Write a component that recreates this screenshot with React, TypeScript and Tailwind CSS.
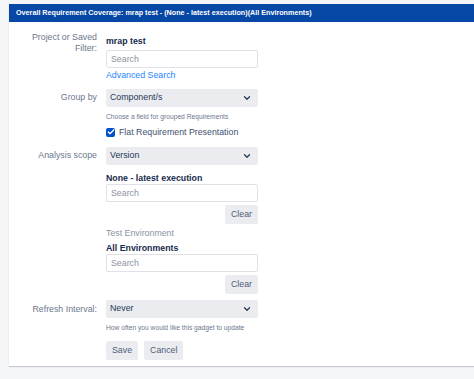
import { ChevronDown, Check } from "lucide-react";

function Label({ children }: { children: React.ReactNode }) {
  return (
    <div className="w-[88px] shrink-0 text-right text-[8.8px] leading-[11px] text-[#6b778c]">
      {children}
    </div>
  );
}

function SearchInput() {
  return (
    <div className="h-[18px] w-[152px] rounded-[2px] border border-[#dfe1e6] bg-white px-[4px] text-[8.8px] leading-[16px] text-[#8c93a0]">
      Search
    </div>
  );
}

function Select({ value }: { value: string }) {
  return (
    <div className="flex h-[18px] w-[152px] items-center justify-between rounded-[2px] bg-[#ebecf0] pl-[4px] pr-[6px] text-[8.8px] text-[#253858]">
      <span>{value}</span>
      <ChevronDown size={10} strokeWidth={3} className="text-[#253858]" />
    </div>
  );
}

function Button({ children }: { children: React.ReactNode }) {
  return (
    <div className="flex h-[19px] items-center justify-center rounded-[2px] bg-[#ebecf0] px-[6px] text-[8.8px] text-[#505f79]">
      {children}
    </div>
  );
}

export default function App() {
  return (
    <div
      className="h-[379px] w-[474px] overflow-hidden bg-[#f4f5f7] pl-[9px] pt-[4px]"
      style={{ fontFamily: '"Liberation Sans", Arial, sans-serif' }}
    >
      <div className="h-[362px] bg-white shadow-[0_1px_1px_rgba(9,30,66,0.2)]">
        <div className="flex h-[18px] items-center bg-[#0747a6] pl-[7px] text-[7.2px] font-bold text-white">
          Overall Requirement Coverage: mrap test - (None - latest execution)(All Environments)
        </div>
        <div className="flex flex-col pt-[10px]">
          {/* Project */}
          <div className="flex gap-[9px]">
            <Label>
              Project or Saved
              <br />
              Filter:
            </Label>
            <div className="flex flex-col">
              <div className="mt-[3px] h-[12px] text-[8.8px] font-bold leading-[12px] text-[#172b4d]">mrap test</div>
              <div className="mt-[3px]">
                <SearchInput />
              </div>
              <div className="mt-[1px] text-[8.8px] leading-[13px] text-[#2684ff]">Advanced Search</div>
            </div>
          </div>

          {/* Group by */}
          <div className="mt-[7px] flex gap-[9px]">
            <Label>
              <div className="pt-[3px]">Group by</div>
            </Label>
            <div className="flex flex-col">
              <Select value="Component/s" />
              <div className="mt-[5px] text-[6.7px] leading-[9px] text-[#6b778c]">
                Choose a field for grouped Requirements
              </div>
              <div className="mt-[5px] flex items-center gap-[4px]">
                <div className="flex h-[9px] w-[9px] items-center justify-center rounded-[2px] bg-[#0052cc]">
                  <Check size={8} strokeWidth={4} className="text-white" />
                </div>
                <span className="text-[8.8px] leading-[12px] text-[#42526e]">Flat Requirement Presentation</span>
              </div>
            </div>
          </div>

          {/* Analysis scope */}
          <div className="mt-[9px] flex gap-[9px]">
            <Label>
              <div className="pt-[3px]">Analysis scope</div>
            </Label>
            <div className="flex flex-col">
              <Select value="Version" />
              <div className="mt-[7px] text-[8.8px] font-bold leading-[12px] text-[#172b4d]">None - latest execution</div>
              <SearchInput />
              <div className="mt-[3px] flex justify-end">
                <Button>Clear</Button>
              </div>
              <div className="mt-[3px] text-[8.8px] leading-[12px] text-[#8993a4]">Test Environment</div>
              <div className="mt-[3px] text-[8.8px] font-bold leading-[12px] text-[#172b4d]">All Environments</div>
              <SearchInput />
              <div className="mt-[3px] flex justify-end">
                <Button>Clear</Button>
              </div>
            </div>
          </div>

          {/* Refresh */}
          <div className="mt-[6px] flex gap-[9px]">
            <Label>
              <div className="pt-[4px]">Refresh Interval:</div>
            </Label>
            <div className="flex flex-col">
              <Select value="Never" />
              <div className="mt-[5px] text-[6.7px] leading-[9px] text-[#6b778c]">
                How often you would like this gadget to update
              </div>
              <div className="mt-[9px] flex gap-[6px]">
                <Button>Save</Button>
                <Button>Cancel</Button>
              </div>
            </div>
          </div>
        </div>
      </div>
    </div>
  );
}
